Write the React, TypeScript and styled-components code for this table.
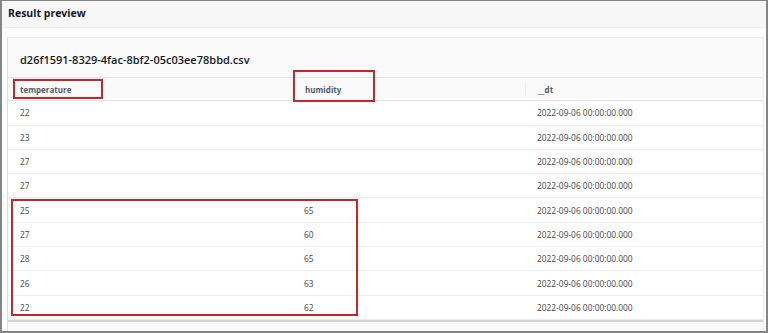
import React from "react";
import styled, { createGlobalStyle } from "styled-components";

const GlobalStyle = createGlobalStyle`
  html, body {
    margin: 0;
    padding: 0;
    background: #ffffff;
  }
  * {
    box-sizing: border-box;
  }
`;

const ROWS = [
  ["22", "", "2022-09-06 00:00:00.000"],
  ["23", "", "2022-09-06 00:00:00.000"],
  ["27", "", "2022-09-06 00:00:00.000"],
  ["27", "", "2022-09-06 00:00:00.000"],
  ["25", "65", "2022-09-06 00:00:00.000"],
  ["27", "60", "2022-09-06 00:00:00.000"],
  ["28", "65", "2022-09-06 00:00:00.000"],
  ["26", "63", "2022-09-06 00:00:00.000"],
  ["22", "62", "2022-09-06 00:00:00.000"],
];

const COLUMNS = ["temperature", "humidity", "__dt"];

function App() {
  return (
    <>
      <GlobalStyle />
      <Frame>
        <PanelHeader>Result preview</PanelHeader>
        <Card>
          <CardTitle>d26f1591-8329-4fac-8bf2-05c03ee78bbd.csv</CardTitle>
          <Table>
            <HeadRow>
              {COLUMNS.map((col, i) => (
                <HeadCell key={col} $divider={i > 0}>
                  {col}
                </HeadCell>
              ))}
            </HeadRow>
            {ROWS.map((row, r) => (
              <Row key={r}>
                {row.map((value, c) => (
                  <Cell key={c}>{value}</Cell>
                ))}
              </Row>
            ))}
            {/* red annotation boxes drawn over the table */}
            <Marker $x={5} $y={2} $w={90} $h={20} />
            <Marker $x={285} $y={-7} $w={82} $h={32} />
            <Marker $x={3} $y={122} $w={347} $h={117} />
          </Table>
        </Card>
      </Frame>
    </>
  );
}

export default App;

const Frame = styled.div`
  width: 768px;
  height: 333px;
  border: 2px solid #858585;
  border-top-width: 1px;
  border-bottom-width: 2px;
  background: #ffffff;
  font-family: "Open Sans", "Noto Sans", sans-serif;
  color: #16191f;
  overflow: hidden;
`;

const PanelHeader = styled.div`
  display: flex;
  align-items: center;
  height: 27px;
  padding: 0 0 3px 6px;
  background: #f7f7f7;
  border-bottom: 1px solid #ededed;
  font-size: 10.5px;
  font-weight: 700;
`;

const Card = styled.div`
  margin: 9px 2px 0 5px;
  height: 294px;
  background: #fafafa;
  border-left: 1px solid #dedede;
  border-top: 1px solid #ececec;
  border-right: 1px solid #ececec;
`;

const CardTitle = styled.div`
  display: flex;
  align-items: center;
  height: 39px;
  padding: 3px 0 0 12px;
  font-size: 11px;
  font-weight: 600;
  color: #16191f;
`;

const Table = styled.div`
  position: relative;
  border-bottom: 2px solid #d4d4d4;
`;

const grid = `
  display: grid;
  grid-template-columns: 284px 233px 1fr;
  height: 24.3px;
  align-items: center;
`;

const HeadRow = styled.div`
  ${grid}
  background: #fafafa;
  border-top: 1px solid #e6e6e6;
  border-bottom: 1px solid #e6e6e6;
`;

const HeadCell = styled.div<{ $divider: boolean }>`
  display: flex;
  align-items: center;
  height: 14px;
  padding-left: 12px;
  border-left: ${(p) => (p.$divider ? "1px solid #ececec" : "none")};
  font-size: 8px;
  font-weight: 700;
  color: #545b64;
`;

const Row = styled.div`
  ${grid}
  background: #ffffff;
  border-bottom: 1px solid #ededed;
  &:last-of-type {
    border-bottom: none;
  }
`;

const Cell = styled.div`
  padding-left: 12px;
  font-size: 8.4px;
  color: #484848;
  white-space: nowrap;
`;

const Marker = styled.div<{ $x: number; $y: number; $w: number; $h: number }>`
  position: absolute;
  left: ${(p) => p.$x}px;
  top: ${(p) => p.$y}px;
  width: ${(p) => p.$w}px;
  height: ${(p) => p.$h}px;
  border: 2px solid #c7252d;
  pointer-events: none;
`;
